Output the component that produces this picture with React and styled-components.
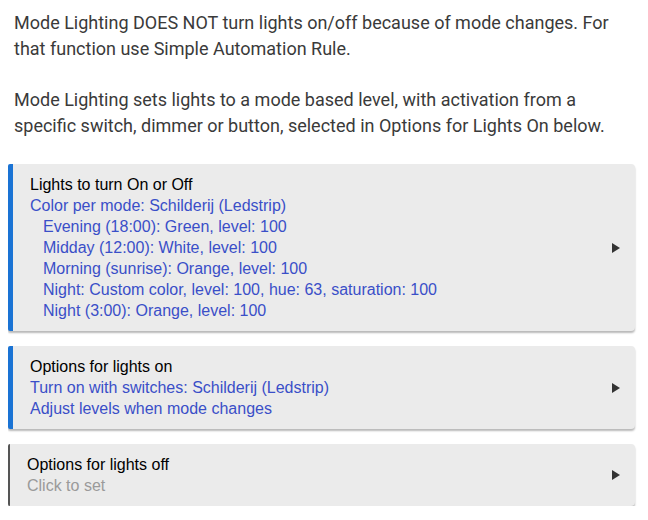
import React from 'react';
import styled, { createGlobalStyle } from 'styled-components';

const GlobalStyle = createGlobalStyle`
  body {
    margin: 8px;
    background: #fff;
  }
`;

const Page = styled.div`
  width: 627px;
`;

const Intro = styled.div`
  padding: 2px 6px 0;
  display: flex;
  flex-direction: column;
  gap: 25px;
  margin-bottom: 25px;
`;

const Para = styled.p`
  margin: 0;
  font-family: Roboto, 'Liberation Sans', sans-serif;
  font-size: 18px;
  line-height: 26px;
  color: #3a3a3a;
`;

const Cards = styled.div`
  display: flex;
  flex-direction: column;
  gap: 15px;
`;

const Card = styled.div`
  display: flex;
  align-items: center;
  background: #ebebeb;
  border-left: ${p => (p.$active ? '5px solid #1a73d4' : '2px solid #555')};
  border-radius: 2px 4px 4px 2px;
  box-shadow: 0 2px 2px rgba(0, 0, 0, 0.28);
  padding: 10px 15px 10px 17px;
  cursor: pointer;
`;

const Body = styled.div`
  flex: 1;
  font-family: 'Liberation Sans', Arial, sans-serif;
  font-size: 16px;
  line-height: 21px;
`;

const Title = styled.div`
  color: #000;
`;

const Line = styled.div`
  color: ${p => (p.$muted ? '#9a9a9a' : '#3a4fc8')};
  padding-left: ${p => (p.$indent ? '13px' : '0')};
`;

const Arrow = styled.span`
  width: 0;
  height: 0;
  border-top: 5px solid transparent;
  border-bottom: 5px solid transparent;
  border-left: 8px solid #333;
`;

const modes = [
  'Evening (18:00): Green, level: 100',
  'Midday (12:00): White, level: 100',
  'Morning (sunrise): Orange, level: 100',
  'Night: Custom color, level: 100, hue: 63, saturation: 100',
  'Night (3:00): Orange, level: 100',
];

export default function App() {
  return (
    <Page>
      <GlobalStyle />
      <Intro>
        <Para>
          Mode Lighting DOES NOT turn lights on/off because of mode changes. For
          that function use Simple Automation Rule.
        </Para>
        <Para>
          Mode Lighting sets lights to a mode based level, with activation from a
          specific switch, dimmer or button, selected in Options for Lights On below.
        </Para>
      </Intro>
      <Cards>
        <Card $active>
          <Body>
            <Title>Lights to turn On or Off</Title>
            <Line>Color per mode: Schilderij (Ledstrip)</Line>
            {modes.map(m => (
              <Line key={m} $indent>
                {m}
              </Line>
            ))}
          </Body>
          <Arrow />
        </Card>
        <Card $active>
          <Body>
            <Title>Options for lights on</Title>
            <Line>Turn on with switches: Schilderij (Ledstrip)</Line>
            <Line>Adjust levels when mode changes</Line>
          </Body>
          <Arrow />
        </Card>
        <Card>
          <Body>
            <Title>Options for lights off</Title>
            <Line $muted>Click to set</Line>
          </Body>
          <Arrow />
        </Card>
      </Cards>
    </Page>
  );
}
